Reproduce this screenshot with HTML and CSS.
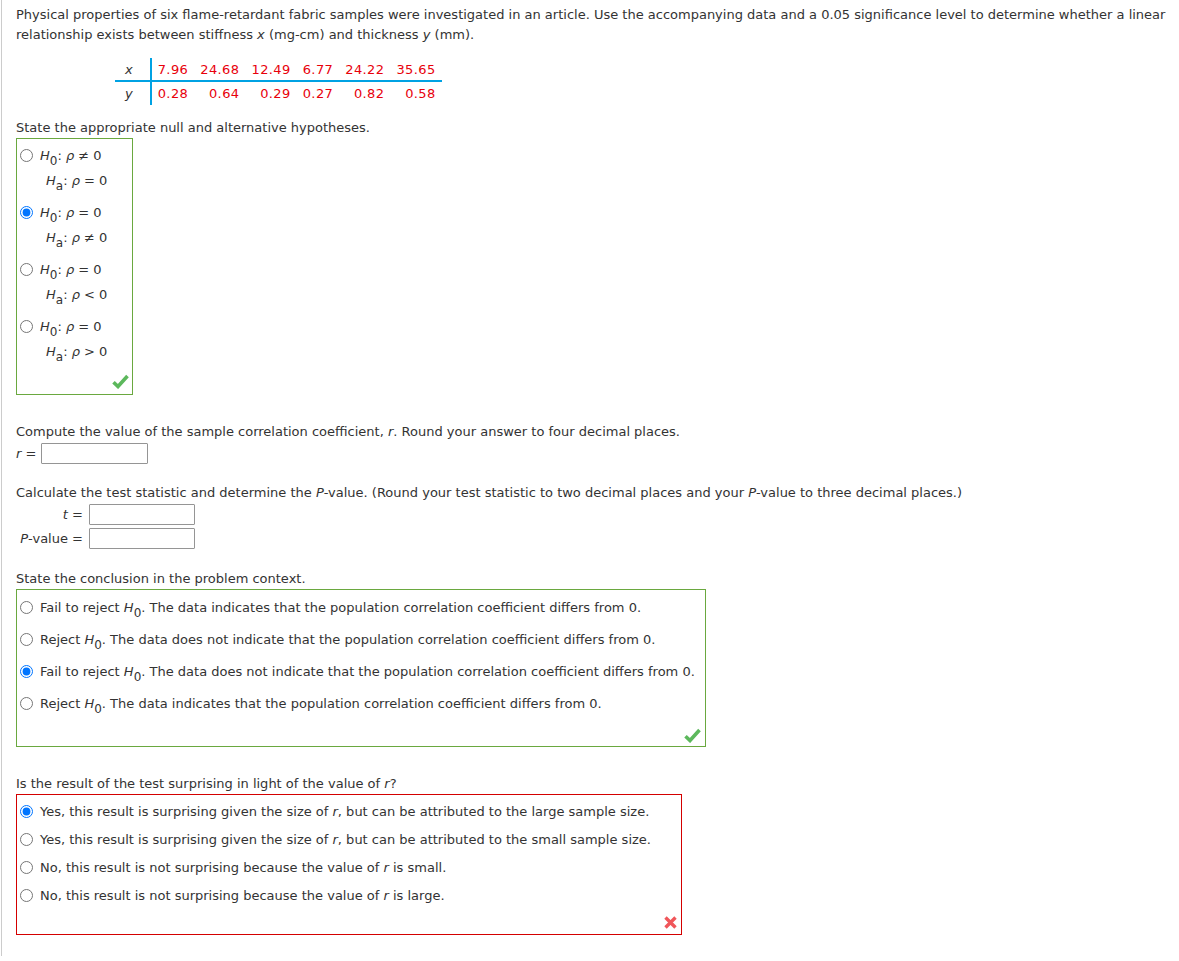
FILE: index.html
```html
<!DOCTYPE html>
<html>
<head>
<meta charset="utf-8">
<link rel="stylesheet" href="styles.css">
</head>
<body>
<div class="page">
  <p class="intro">Physical properties of six flame-retardant fabric samples were investigated in an article. Use the accompanying data and a 0.05 significance level to determine whether a linear<br>relationship exists between stiffness <i>x</i> (mg-cm) and thickness <i>y</i> (mm).</p>

  <table class="data">
    <tr class="r1"><td class="lab"><i>x</i></td><td>7.96</td><td>24.68</td><td>12.49</td><td>6.77</td><td>24.22</td><td>35.65</td></tr>
    <tr class="r2"><td class="lab"><i>y</i></td><td>0.28</td><td>0.64</td><td>0.29</td><td>0.27</td><td>0.82</td><td>0.58</td></tr>
  </table>

  <p class="prompt p-hyp">State the appropriate null and alternative hypotheses.</p>
  <div class="box box-hyp correct">
    <div class="hyp">
      <label class="l1"><input type="radio" name="h"><span><i>H</i><sub>0</sub>: <i>ρ</i> ≠ 0</span></label>
      <div class="l2"><i>H</i><sub>a</sub>: <i>ρ</i> = 0</div>
    </div>
    <div class="hyp">
      <label class="l1"><input type="radio" name="h" checked><span><i>H</i><sub>0</sub>: <i>ρ</i> = 0</span></label>
      <div class="l2"><i>H</i><sub>a</sub>: <i>ρ</i> ≠ 0</div>
    </div>
    <div class="hyp">
      <label class="l1"><input type="radio" name="h"><span><i>H</i><sub>0</sub>: <i>ρ</i> = 0</span></label>
      <div class="l2"><i>H</i><sub>a</sub>: <i>ρ</i> &lt; 0</div>
    </div>
    <div class="hyp">
      <label class="l1"><input type="radio" name="h"><span><i>H</i><sub>0</sub>: <i>ρ</i> = 0</span></label>
      <div class="l2"><i>H</i><sub>a</sub>: <i>ρ</i> &gt; 0</div>
    </div>
    <div class="foot foot-hyp">
      <svg class="check" width="17" height="15" viewBox="0 0 17 15"><path d="M1.5 8.2 L6 12.5 L15.5 2" fill="none" stroke="#5cb85c" stroke-width="3.6"/></svg>
    </div>
  </div>

  <p class="prompt p-r">Compute the value of the sample correlation coefficient, <i>r</i>. Round your answer to four decimal places.</p>
  <div class="rrow"><span><i>r</i> =</span><input class="ans ans-r" type="text"></div>

  <p class="prompt p-t">Calculate the test statistic and determine the <i>P</i>-value. (Round your test statistic to two decimal places and your <i>P</i>-value to three decimal places.)</p>
  <div class="tgrid">
    <span class="tl"><i>t</i> =</span><input class="ans" type="text">
    <span class="tl"><i>P</i>-value =</span><input class="ans" type="text">
  </div>

  <p class="prompt p-c">State the conclusion in the problem context.</p>
  <div class="box box-con correct">
    <label class="opt opt-c"><input type="radio" name="c"><span>Fail to reject <i>H</i><sub>0</sub>. The data indicates that the population correlation coefficient differs from 0.</span></label>
    <label class="opt opt-c"><input type="radio" name="c"><span>Reject <i>H</i><sub>0</sub>. The data does not indicate that the population correlation coefficient differs from 0.</span></label>
    <label class="opt opt-c"><input type="radio" name="c" checked><span>Fail to reject <i>H</i><sub>0</sub>. The data does not indicate that the population correlation coefficient differs from 0.</span></label>
    <label class="opt opt-c"><input type="radio" name="c"><span>Reject <i>H</i><sub>0</sub>. The data indicates that the population correlation coefficient differs from 0.</span></label>
    <div class="foot foot-con">
      <svg class="check" width="17" height="15" viewBox="0 0 17 15"><path d="M1.5 8.2 L6 12.5 L15.5 2" fill="none" stroke="#5cb85c" stroke-width="3.6"/></svg>
    </div>
  </div>

  <p class="prompt p-s">Is the result of the test surprising in light of the value of <i>r</i>?</p>
  <div class="box box-sur wrong">
    <label class="opt opt-s"><input type="radio" name="s" checked><span>Yes, this result is surprising given the size of <i>r</i>, but can be attributed to the large sample size.</span></label>
    <label class="opt opt-s"><input type="radio" name="s"><span>Yes, this result is surprising given the size of <i>r</i>, but can be attributed to the small sample size.</span></label>
    <label class="opt opt-s"><input type="radio" name="s"><span>No, this result is not surprising because the value of <i>r</i> is small.</span></label>
    <label class="opt opt-s"><input type="radio" name="s"><span>No, this result is not surprising because the value of <i>r</i> is large.</span></label>
    <div class="foot foot-sur">
      <svg class="cross" width="13" height="13" viewBox="0 0 13 13"><path d="M1.5 1.5 L11.5 11.5 M11.5 1.5 L1.5 11.5" fill="none" stroke="#f0565a" stroke-width="3.4"/></svg>
    </div>
  </div>
</div>
</body>
</html>
```

FILE: styles.css
```css
html, body {
  margin: 0;
  padding: 0;
  background: #fff;
}

body {
  font-family: "DejaVu Sans", Verdana, sans-serif;
  font-size: 13px;
  color: #333;
}

.page {
  margin-left: 1px;
  border-left: 1px solid #ccc;
  padding: 5px 0 0 14px;
  min-height: 956px;
  box-sizing: border-box;
}

p {
  margin: 0;
}

.intro {
  line-height: 20px;
  white-space: nowrap;
}

i {
  font-style: italic;
}

sub {
  font-size: 12px;
  vertical-align: -5px;
  line-height: 0;
  font-style: normal;
}

/* data table */
.data {
  margin: 13px 0 0 99px;
  border-collapse: collapse;
}

.data td {
  padding: 0 6px;
  text-align: right;
  color: #e8000b;
  white-space: nowrap;
  letter-spacing: 0.4px;
}

.data .r1 td {
  height: 22px;
  border-bottom: 2px solid #00a2e3;
}

.data .r2 td {
  height: 23px;
}

.data td.lab {
  color: #333;
  text-align: left;
  padding: 0 17px 0 10px;
  border-right: 2px solid #00a2e3;
  letter-spacing: 0;
}

/* prompts */
.prompt {
  line-height: 20px;
  white-space: nowrap;
}

.p-hyp { margin-top: 13px; }
.p-r { margin-top: 27px; }
.p-t { margin-top: 19px; }
.p-c { margin-top: 20px; }
.p-s { margin-top: 27px; }

/* boxes */
.box {
  box-sizing: border-box;
  border: 1px solid #6aa83f;
}

.box.wrong {
  border-color: #d40000;
}

.box-hyp {
  width: 117px;
  padding: 4px 0 0 3px;
}

.box-con {
  width: 690px;
  padding: 1px 0 0 3px;
}

.box-sur {
  width: 666px;
  padding: 2px 0 0 3px;
}

input[type="radio"] {
  width: 13px;
  height: 13px;
  margin: 0 7px 0 0;
  flex: none;
}

.hyp {
  margin-bottom: 7px;
}

.hyp .l1 {
  display: flex;
  align-items: center;
  height: 25px;
  white-space: nowrap;
}

.hyp .l2 {
  height: 25px;
  line-height: 25px;
  padding-left: 26px;
  white-space: nowrap;
}

.opt {
  display: flex;
  align-items: center;
  white-space: nowrap;
}

.opt-c { height: 32px; }
.opt-s { height: 28px; }

.foot {
  display: flex;
  justify-content: flex-end;
  align-items: flex-start;
}

.foot svg {
  display: block;
}

.foot-hyp {
  height: 23px;
  padding: 3px 3px 0 0;
  box-sizing: border-box;
}

.foot-con {
  height: 27px;
  padding: 9px 4px 0 0;
  box-sizing: border-box;
}

.foot-sur {
  height: 25px;
  padding: 7px 4px 0 0;
  box-sizing: border-box;
}

/* answer inputs */
.ans {
  box-sizing: border-box;
  width: 106px;
  height: 21px;
  border: 1px solid #959595;
  border-radius: 1px;
  padding: 0;
  margin: 0;
  font: inherit;
  background: #fff;
}

.rrow {
  display: flex;
  align-items: center;
  gap: 5px;
  margin-top: 1px;
  height: 21px;
}

.ans-r {
  width: 107px;
}

.tgrid {
  display: grid;
  grid-template-columns: 67px auto;
  justify-content: start;
  align-items: center;
  column-gap: 6px;
  row-gap: 3px;
  margin-top: 1px;
}

.tl {
  text-align: right;
  white-space: nowrap;
}
```
